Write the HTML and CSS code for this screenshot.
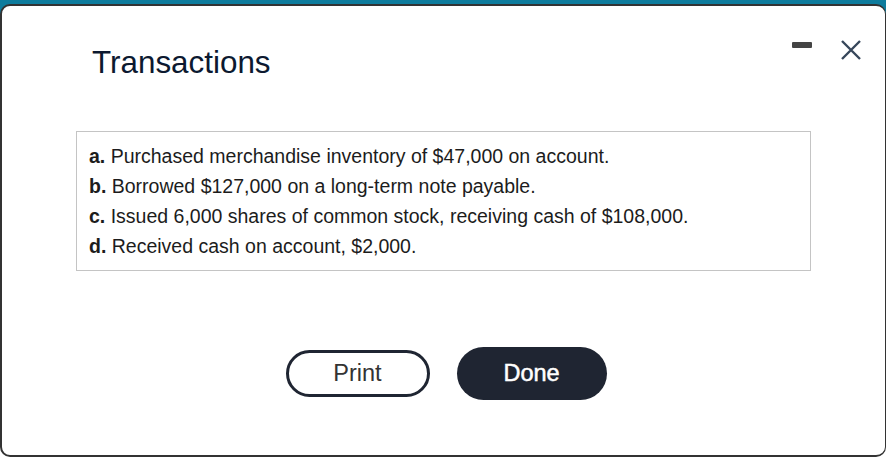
FILE: index.html
```html
<!DOCTYPE html>
<html lang="en">

<head>
    <meta charset="UTF-8">
    <meta name="viewport" content="width=device-width, initial-scale=1.0">
    <title>Transactions</title>
    <link rel="stylesheet" href="styles.css">
</head>

<body>
    <div class="dialog">
        <div class="dialog-header">
            <h2 class="dialog-title">Transactions</h2>
            <div class="window-controls">
                <button class="icon-btn" aria-label="Minimize">
                    <svg width="20" height="20" viewBox="0 0 20 20">
                        <rect x="0" y="2" width="20" height="6" rx="1" fill="#444" />
                    </svg>
                </button>
                <button class="icon-btn" aria-label="Close">
                    <svg width="20" height="20" viewBox="0 0 20 20">
                        <path d="M1 1 L19 19 M19 1 L1 19" stroke="#36465a" stroke-width="2.4" fill="none" />
                    </svg>
                </button>
            </div>
        </div>

        <div class="transactions">
            <p><b>a.</b> Purchased merchandise inventory of $47,000 on account.</p>
            <p><b>b.</b> Borrowed $127,000 on a long-term note payable.</p>
            <p><b>c.</b> Issued 6,000 shares of common stock, receiving cash of $108,000.</p>
            <p><b>d.</b> Received cash on account, $2,000.</p>
        </div>

        <div class="dialog-actions">
            <button class="btn btn-outline">Print</button>
            <button class="btn btn-dark">Done</button>
        </div>
    </div>
</body>

</html>
```

FILE: styles.css
```css
html,
body {
    margin: 0;
    height: 100%;
}

body {
    font-family: "Liberation Sans", Arial, sans-serif;
    background: linear-gradient(#0e7c9d 0 50%, #ffffff 50%);
    padding-top: 4px;
    box-sizing: border-box;
}

.dialog {
    width: 886px;
    height: 453px;
    box-sizing: border-box;
    background: #fff;
    border: 2px solid #333;
    border-right-width: 1px;
    border-radius: 10px;
}

.dialog-header {
    display: flex;
    justify-content: space-between;
    align-items: flex-start;
    padding: 34px 24px 0 90px;
}

.dialog-title {
    margin: 5px 0 0;
    font-size: 31.4px;
    line-height: 36px;
    font-weight: normal;
    color: #0c1930;
}

.window-controls {
    display: flex;
    gap: 29px;
}

.icon-btn {
    width: 20px;
    height: 20px;
    padding: 0;
    border: none;
    background: none;
    display: block;
}

.icon-btn svg {
    display: block;
}

.transactions {
    margin: 50px 0 0 74px;
    width: 735px;
    box-sizing: border-box;
    padding: 9px 12px;
    border: 1px solid #c4c4c4;
    font-size: 19.5px;
    line-height: 30px;
    color: #1c1c1c;
}

.transactions p {
    margin: 0;
}

.dialog-actions {
    display: flex;
    justify-content: center;
    align-items: center;
    gap: 27px;
    margin-top: 76px;
    padding-left: 5px;
}

.btn {
    font-family: "Liberation Sans", Arial, sans-serif;
    font-size: 23.5px;
    border-radius: 30px;
    cursor: pointer;
    box-sizing: border-box;
}

.btn-outline {
    width: 144px;
    height: 47px;
    background: #fff;
    color: #333;
    border: 3px solid #1f2532;
}

.btn-dark {
    width: 150px;
    height: 53px;
    background: #1f2532;
    color: #fff;
    border: none;
    -webkit-text-stroke: 0.5px #fff;
}
```
